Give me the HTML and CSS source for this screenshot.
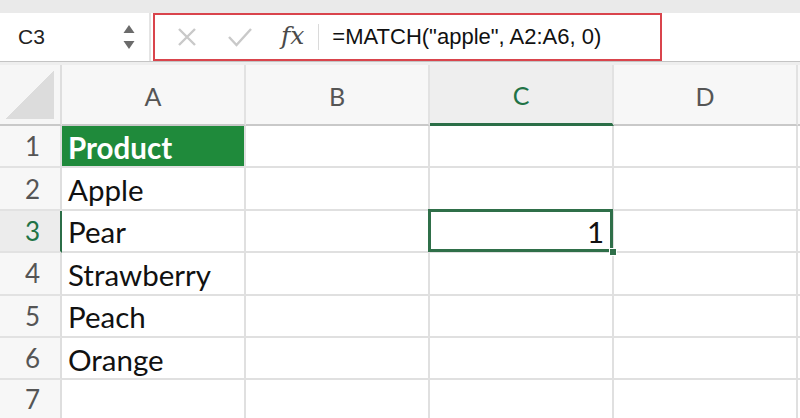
FILE: index.html
```html
<!DOCTYPE html>
<html lang="en">
<head>
    <meta charset="UTF-8">
    <meta name="viewport" content="width=device-width, initial-scale=1.0">
    <title>MATCH example</title>
    <link rel="stylesheet" href="styles.css">
</head>
<body>
<div class="top-strip"></div>

<div class="formula-bar">
    <div class="name-box">
        <span class="cell-ref">C3</span>
        <div class="spinner">
            <svg width="12" height="26" viewBox="0 0 12 26">
                <path d="M6 1 L11.5 9 L0.5 9 Z" fill="#6b6b6b"/>
                <path d="M0.5 17 L11.5 17 L6 25 Z" fill="#6b6b6b"/>
            </svg>
        </div>
    </div>
    <div class="formula-box">
        <svg class="icon-cancel" width="20" height="20" viewBox="0 0 20 20">
            <path d="M2 2 L18 18 M18 2 L2 18" stroke="#c9c9c9" stroke-width="2.4" fill="none"/>
        </svg>
        <svg class="icon-enter" width="26" height="20" viewBox="0 0 26 20">
            <path d="M2 10 L9.5 18 L24 2" stroke="#c9c9c9" stroke-width="2.4" fill="none"/>
        </svg>
        <span class="fx">fx</span>
        <span class="fx-sep"></span>
        <span class="formula">=MATCH("apple", A2:A6, 0)</span>
    </div>
</div>

<div class="gap-strip"></div>

<div class="sheet">
    <div class="corner"><span class="corner-tri"></span></div>
    <div class="col-head">A</div>
    <div class="col-head">B</div>
    <div class="col-head active">C</div>
    <div class="col-head">D</div>
    <div class="col-head edge"></div>

    <div class="row-head">1</div>
    <div class="cell header-cell">Product</div>
    <div class="cell"></div>
    <div class="cell"></div>
    <div class="cell"></div>
    <div class="cell edge"></div>

    <div class="row-head">2</div>
    <div class="cell">Apple</div>
    <div class="cell"></div>
    <div class="cell"></div>
    <div class="cell"></div>
    <div class="cell edge"></div>

    <div class="row-head active">3</div>
    <div class="cell">Pear</div>
    <div class="cell"></div>
    <div class="cell num selected">1<span class="fill-handle"></span></div>
    <div class="cell"></div>
    <div class="cell edge"></div>

    <div class="row-head">4</div>
    <div class="cell">Strawberry</div>
    <div class="cell"></div>
    <div class="cell"></div>
    <div class="cell"></div>
    <div class="cell edge"></div>

    <div class="row-head">5</div>
    <div class="cell">Peach</div>
    <div class="cell"></div>
    <div class="cell"></div>
    <div class="cell"></div>
    <div class="cell edge"></div>

    <div class="row-head">6</div>
    <div class="cell">Orange</div>
    <div class="cell"></div>
    <div class="cell"></div>
    <div class="cell"></div>
    <div class="cell edge"></div>

    <div class="row-head">7</div>
    <div class="cell"></div>
    <div class="cell"></div>
    <div class="cell"></div>
    <div class="cell"></div>
    <div class="cell edge"></div>
</div>
</body>
</html>
```

FILE: styles.css
```css
* {
    margin: 0;
    padding: 0;
    box-sizing: border-box;
}

body {
    width: 800px;
    height: 418px;
    overflow: hidden;
    background: #fff;
    font-family: Lato, 'Noto Sans', sans-serif;
}

.top-strip {
    height: 13px;
    background: #eaeaea;
}

.formula-bar {
    height: 49px;
    display: flex;
    align-items: stretch;
    background: #fff;
    border-bottom: 1px solid #c4c4c4;
}

.name-box {
    width: 151px;
    display: flex;
    align-items: center;
    justify-content: space-between;
    padding: 0 14px 0 18px;
    border-right: 2px solid #e4e4e4;
}

.cell-ref {
    font-family: 'Liberation Sans', Arial, sans-serif;
    font-size: 21px;
    color: #222;
}

.spinner {
    display: flex;
    align-items: center;
}

.formula-box {
    width: 509px;
    margin-left: 2px;
    display: flex;
    align-items: center;
    border: 2px solid #d9444c;
    padding-left: 22px;
}

.icon-cancel {
    margin-right: 30px;
}

.icon-enter {
    margin-right: 28px;
}

.fx {
    font-family: 'DejaVu Serif', 'Liberation Serif', serif;
    font-style: italic;
    font-size: 25px;
    color: #4a4a4a;
    margin-top: -3px;
}

.fx-sep {
    width: 1px;
    height: 26px;
    background: #dadada;
    margin: 0 13px 0 14px;
}

.formula {
    font-family: 'Liberation Sans', Arial, sans-serif;
    font-size: 22px;
    color: #111;
}

.gap-strip {
    height: 3px;
    background: #eeeeee;
}

.sheet {
    display: grid;
    grid-template-columns: 62px 184px 184px 184px 184px 1fr;
    grid-template-rows: 61px repeat(6, 42.4px) 40px;
}

.corner {
    background: #f6f6f6;
    border-right: 2px solid #dedede;
    border-bottom: 2px solid #c9c9c9;
    position: relative;
}

.corner-tri {
    position: absolute;
    right: 6px;
    bottom: 5px;
    width: 48px;
    height: 48px;
    background: linear-gradient(to bottom right, transparent 50%, #dcdcdc 50%);
}

.col-head {
    background: #f7f7f7;
    border-right: 2px solid #e2e2e2;
    border-bottom: 2px solid #c9c9c9;
    display: flex;
    align-items: center;
    justify-content: center;
    font-size: 25px;
    color: #555;
    padding-top: 2px;
}

.col-head.active {
    background: #eeeeee;
    color: #217346;
    border-bottom: 3px solid #2b6e47;
}

.col-head.edge,
.cell.edge {
    border-right: none;
}

.row-head {
    background: #f7f7f7;
    border-right: 2px solid #dedede;
    border-bottom: 2px solid #e2e2e2;
    display: flex;
    align-items: center;
    justify-content: center;
    font-size: 26px;
    color: #555;
    padding-left: 5px;
}

.row-head.active {
    background: #ececec;
    color: #217346;
    border-right: 2px solid #2b6e47;
}

.cell {
    border-right: 2px solid #e0e0e0;
    border-bottom: 2px solid #e0e0e0;
    display: flex;
    align-items: center;
    padding: 2px 0 0 6px;
    font-size: 29.5px;
    color: #111;
    white-space: nowrap;
}

.header-cell {
    background: #1f8a3b;
    color: #fff;
    font-weight: bold;
}

.cell.num {
    justify-content: flex-end;
    padding-right: 8px;
}

.cell.selected {
    position: relative;
}

.cell.selected::after {
    content: "";
    position: absolute;
    left: -2px;
    top: -2px;
    right: -1px;
    bottom: -1px;
    border: 3px solid #2f6f49;
}

.fill-handle {
    position: absolute;
    right: -5px;
    bottom: -5px;
    width: 8px;
    height: 8px;
    background: #2f6f49;
    border: 1px solid #fff;
    z-index: 1;
}
```
